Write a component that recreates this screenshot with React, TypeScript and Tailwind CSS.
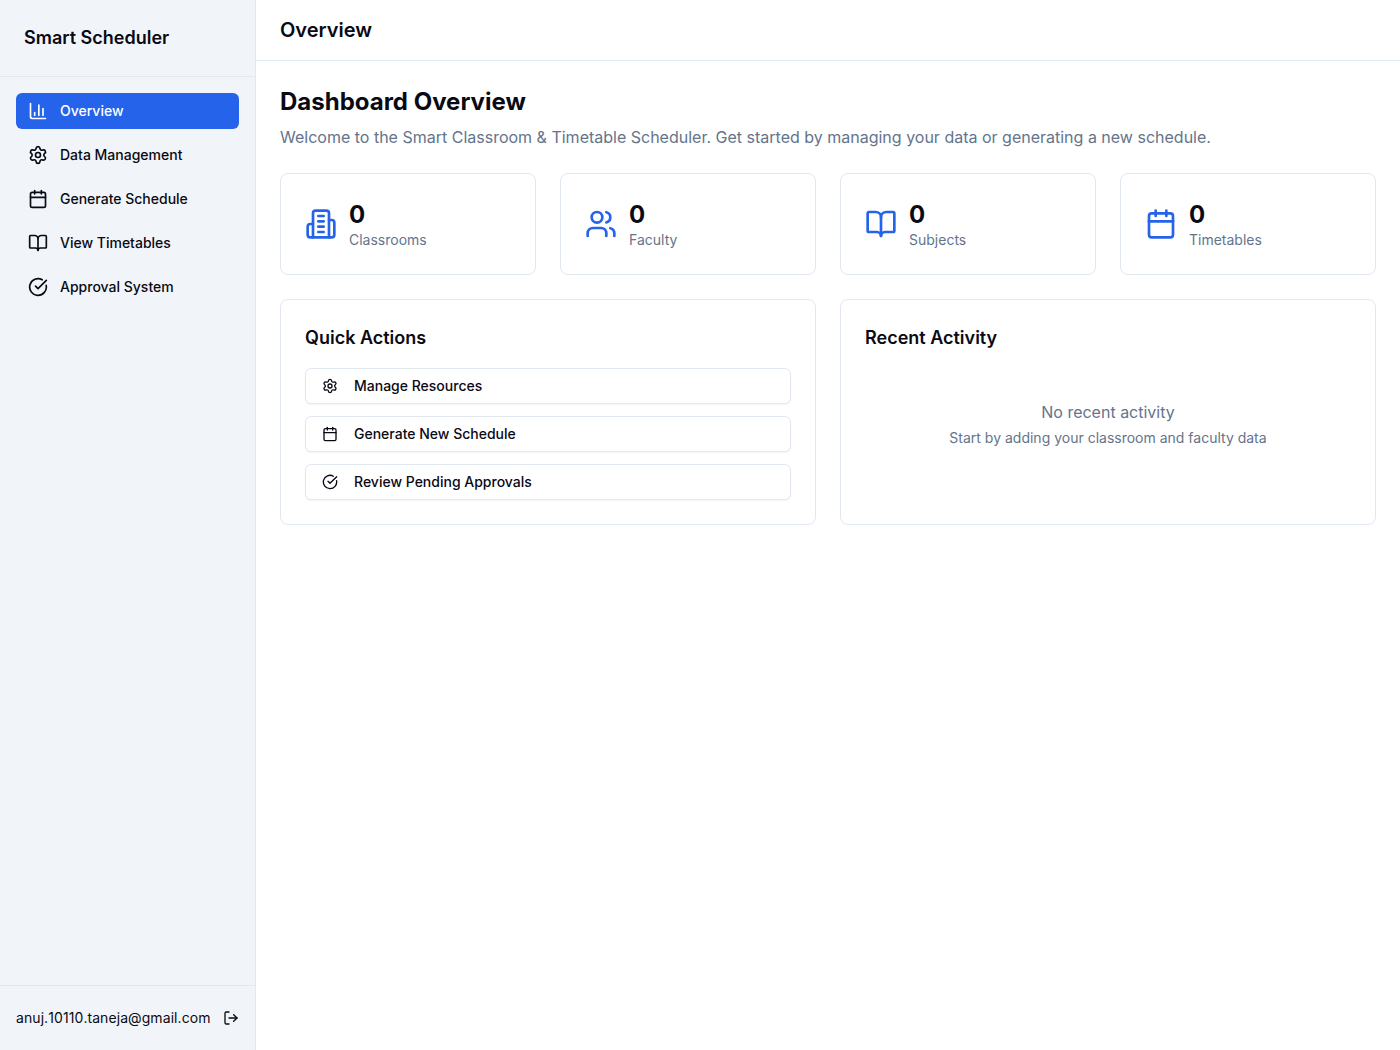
import { BookOpen, Calendar, ChartColumn, CircleCheckBig, LogOut, Settings, Users } from "lucide-react";
import type { ReactNode } from "react";

// lucide's older Building2 outline, the current package draws it differently
function Building({ className }: { className?: string }) {
  return (
    <svg
      viewBox="0 0 24 24"
      fill="none"
      stroke="currentColor"
      strokeWidth={2}
      strokeLinecap="round"
      strokeLinejoin="round"
      className={className}
    >
      <path d="M6 22V4a2 2 0 0 1 2-2h8a2 2 0 0 1 2 2v18Z" />
      <path d="M6 12H4a2 2 0 0 0-2 2v6a2 2 0 0 0 2 2h2" />
      <path d="M18 9h2a2 2 0 0 1 2 2v9a2 2 0 0 1-2 2h-2" />
      <path d="M10 6h4" />
      <path d="M10 10h4" />
      <path d="M10 14h4" />
      <path d="M10 18h4" />
    </svg>
  );
}

const navItems = [
  { label: "Overview", icon: <ChartColumn className="w-5 h-5" />, active: true },
  { label: "Data Management", icon: <Settings className="w-5 h-5" /> },
  { label: "Generate Schedule", icon: <Calendar className="w-5 h-5" /> },
  { label: "View Timetables", icon: <BookOpen className="w-5 h-5" /> },
  { label: "Approval System", icon: <CircleCheckBig className="w-5 h-5" /> },
];

const stats = [
  { label: "Classrooms", icon: <Building className="w-8 h-8 text-[#2563eb]" /> },
  { label: "Faculty", icon: <Users className="w-8 h-8 text-[#2563eb]" /> },
  { label: "Subjects", icon: <BookOpen className="w-8 h-8 text-[#2563eb]" /> },
  { label: "Timetables", icon: <Calendar className="w-8 h-8 text-[#2563eb]" /> },
];

const actions = [
  { label: "Manage Resources", icon: <Settings className="w-4 h-4" /> },
  { label: "Generate New Schedule", icon: <Calendar className="w-4 h-4" /> },
  { label: "Review Pending Approvals", icon: <CircleCheckBig className="w-4 h-4" /> },
];

function Panel({ title, children }: { title: string; children: ReactNode }) {
  return (
    <div className="bg-white border border-[#e2e8f0] rounded-lg p-6">
      <h3 className="text-lg font-semibold mb-4">{title}</h3>
      {children}
    </div>
  );
}

export default function App() {
  return (
    <div className="flex h-[1050px] bg-white text-[#0a0a14] font-['Inter',sans-serif]">
      {/* Sidebar */}
      <aside className="w-64 shrink-0 flex flex-col bg-[#f1f5f9] border-r border-[#e2e8f0]">
        <div className="p-6 border-b border-[#e2e8f0]">
          <h1 className="text-lg font-semibold">Smart Scheduler</h1>
        </div>
        <nav className="flex-1 p-4 space-y-2">
          {navItems.map((item) => (
            <div
              key={item.label}
              className={
                item.active
                  ? "h-9 px-3 flex items-center gap-3 rounded-md text-sm font-medium bg-[#2563eb] text-white"
                  : "h-9 px-3 flex items-center gap-3 rounded-md text-sm font-medium"
              }
            >
              {item.icon}
              {item.label}
            </div>
          ))}
        </nav>
        <div className="p-4 border-t border-[#e2e8f0] flex items-center justify-between h-[65px]">
          <span className="text-sm [font-kerning:none] tracking-[0.08px]">anuj.10110.taneja@gmail.com</span>
          <LogOut className="w-4 h-4" />
        </div>
      </aside>

      {/* Main content */}
      <main className="flex-1 min-w-0">
        <header className="h-[61px] px-6 flex items-center border-b border-[#e2e8f0]">
          <h2 className="text-xl font-semibold">Overview</h2>
        </header>
        <div className="p-6">
          <h2 className="h-8 text-2xl leading-[33px] font-bold">Dashboard Overview</h2>
          <p className="mt-2 text-[#64748b]">
            Welcome to the Smart Classroom &amp; Timetable Scheduler. Get started by managing your data or generating a new schedule.
          </p>

          <div className="grid grid-cols-4 gap-6 mt-6">
            {stats.map((stat) => (
              <div key={stat.label} className="bg-white border border-[#e2e8f0] rounded-lg p-6 flex items-center gap-3">
                {stat.icon}
                <div>
                  <div className="h-8 text-2xl leading-[33px] font-bold">0</div>
                  <div className="text-sm text-[#64748b]">{stat.label}</div>
                </div>
              </div>
            ))}
          </div>

          <div className="grid grid-cols-2 gap-6 mt-6">
            <Panel title="Quick Actions">
              <div className="space-y-3">
                {actions.map((action) => (
                  <div
                    key={action.label}
                    className="h-9 px-4 flex items-center gap-4 bg-white border border-[#e2e8f0] rounded-md shadow-xs text-sm font-medium"
                  >
                    {action.icon}
                    {action.label}
                  </div>
                ))}
              </div>
            </Panel>
            <Panel title="Recent Activity">
              <div className="py-8 text-center text-[#64748b]">
                <p>No recent activity</p>
                <p className="mt-1 text-sm">Start by adding your classroom and faculty data</p>
              </div>
            </Panel>
          </div>
        </div>
      </main>
    </div>
  );
}
